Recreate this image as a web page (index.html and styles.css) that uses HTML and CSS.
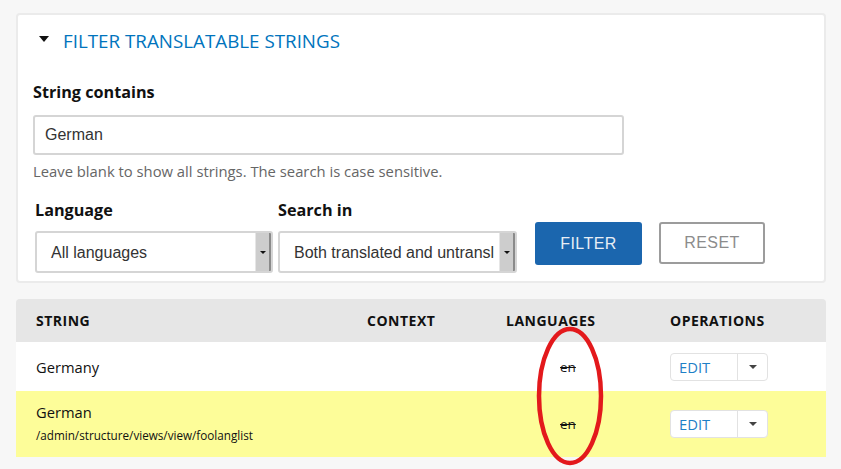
FILE: index.html
```html
<!DOCTYPE html>
<html>
<head>
<meta charset="utf-8">
<link rel="stylesheet" href="styles.css">
</head>
<body>
<div class="page">
  <section class="panel">
    <div class="summary">
      <span class="caret"></span>
      <span class="summary-title">FILTER TRANSLATABLE STRINGS</span>
    </div>
    <div class="field">
      <label class="label">String contains</label>
      <div class="textbox">German</div>
      <div class="desc">Leave blank to show all strings. The search is case sensitive.</div>
    </div>
    <div class="row">
      <div class="sel-field">
        <label class="label">Language</label>
        <div class="select"><span class="sel-text">All languages</span><span class="sel-btn"><span class="tri"></span></span></div>
      </div>
      <div class="sel-field second">
        <label class="label">Search in</label>
        <div class="select"><span class="sel-text">Both translated and untransl</span><span class="sel-btn"><span class="tri"></span></span></div>
      </div>
      <div class="btn primary">FILTER</div>
      <div class="btn secondary">RESET</div>
    </div>
  </section>

  <div class="table">
    <div class="thead">
      <div>STRING</div>
      <div>CONTEXT</div>
      <div>LANGUAGES</div>
      <div>OPERATIONS</div>
    </div>
    <div class="tr">
      <div class="c-str">Germany</div>
      <div></div>
      <div class="c-lang"><s>en</s></div>
      <div class="c-op"><div class="drop"><span class="drop-main">EDIT</span><span class="drop-tog"><span class="tri small"></span></span></div></div>
    </div>
    <div class="tr hl">
      <div class="c-str two">German<div class="path">/admin/structure/views/view/foolanglist</div></div>
      <div></div>
      <div class="c-lang"><s>en</s></div>
      <div class="c-op"><div class="drop"><span class="drop-main">EDIT</span><span class="drop-tog"><span class="tri small"></span></span></div></div>
    </div>
  </div>
</div>
<svg class="circle" width="841" height="469" viewBox="0 0 841 469">
  <ellipse cx="570" cy="396" rx="31" ry="67" fill="none" stroke="#e3191c" stroke-width="4.5"/>
</svg>
</body>
</html>
```

FILE: styles.css
```css
html, body {
  margin: 0;
  padding: 0;
}
body {
  background: #f7f7f7;
  font-family: "Open Sans", "Noto Sans", sans-serif;
  color: #222;
  width: 841px;
  height: 469px;
  overflow: hidden;
  position: relative;
}
.page {
  padding: 13px 15px 0 16px;
}
.panel {
  background: #fff;
  border: 2px solid #ebebeb;
  border-radius: 4px;
  padding: 0 0 8px 15px;
  height: 270px;
  box-sizing: border-box;
}
.summary {
  display: flex;
  align-items: center;
  height: 52px;
  padding-left: 6px;
}
.caret {
  width: 0;
  height: 0;
  border-left: 5px solid transparent;
  border-right: 5px solid transparent;
  border-top: 6px solid #111;
  margin-right: 14px;
  margin-top: -4px;
}
.summary-title {
  color: #0074bd;
  font-size: 18.8px;
}
.field {
  margin-top: 15px;
}
.label {
  display: block;
  font-weight: 700;
  font-size: 16.2px;
  color: #111;
  line-height: 20px;
}
.textbox {
  margin-top: 13px;
  width: 591px;
  height: 40px;
  box-sizing: border-box;
  border: 2px solid #d5d5d5;
  border-radius: 3px;
  font-family: "Liberation Sans", Arial, sans-serif;
  font-size: 16px;
  color: #333;
  padding: 0 10px;
  display: flex;
  align-items: center;
}
.desc {
  margin-top: 6px;
  font-size: 14.8px;
  color: #666;
  line-height: 20px;
}
.row {
  display: flex;
  align-items: flex-end;
  margin-top: 19px;
  padding-left: 2px;
}
.sel-field .select {
  margin-top: 11px;
}
.sel-field {
  margin-right: 5px;
}
.select {
  width: 238px;
  height: 42px;
  box-sizing: border-box;
  border: 2px solid #d5d5d5;
  border-radius: 3px;
  display: flex;
  font-family: "Liberation Sans", Arial, sans-serif;
  font-size: 16px;
  color: #333;
  overflow: hidden;
}
.sel-text {
  flex: 1;
  padding-left: 14px;
  padding-top: 2px;
  display: flex;
  align-items: center;
  white-space: nowrap;
  overflow: hidden;
}
.sel-btn {
  width: 13px;
  background: #cdcdcd;
  border-right: 2px solid #8a8a8a;
  border-left: 1px solid #e6e6e6;
  display: flex;
  align-items: center;
  justify-content: center;
}
.tri {
  width: 0;
  height: 0;
  border-left: 3px solid transparent;
  border-right: 3px solid transparent;
  border-top: 3px solid #111;
}
.tri.small {
  border-left-width: 4px;
  border-right-width: 4px;
  border-top: 4px solid #444;
}
.second .select {
  width: 239px;
}
.btn {
  height: 43px;
  box-sizing: border-box;
  border-radius: 3px;
  display: flex;
  align-items: center;
  justify-content: center;
  font-family: "Liberation Sans", Arial, sans-serif;
  font-size: 16px;
  letter-spacing: 0.4px;
  margin-bottom: 8px;
}
.primary {
  margin-left: 13px;
  width: 107px;
  background: #1b66ae;
  color: #e8eef5;
}
.secondary {
  margin-left: 17px;
  width: 106px;
  border: 2px solid #9c9c9c;
  color: #8c8c8c;
  height: 42px;
  margin-bottom: 9px;
}
.table {
  margin-top: 16px;
  width: 810px;
}
.thead, .tr {
  display: grid;
  grid-template-columns: 331px 139px 164px 1fr;
  padding-left: 20px;
}
.thead {
  background: #e6e6e6;
  border-radius: 4px 4px 0 0;
  height: 43px;
  align-items: center;
  font-weight: 700;
  font-size: 14px;
  letter-spacing: 0.5px;
  color: #111;
}
.tr {
  background: #fff;
  height: 49px;
  align-items: center;
  font-size: 14.7px;
  color: #111;
}
.tr.hl {
  background: #fdfd99;
  height: 66px;
}
.c-str.two {
  padding-bottom: 4px;
}
.path {
  font-size: 11.7px;
  margin-top: 5px;
}
.c-lang {
  padding-left: 54px;
  font-size: 13.5px;
}
.c-lang s {
  text-decoration-thickness: 1px;
}
.drop {
  display: flex;
  width: 98px;
  height: 28px;
  box-sizing: border-box;
  border: 1px solid #e2e2e2;
  border-radius: 4px;
  background: #fff;
}
.drop-main {
  width: 67px;
  border-right: 1px solid #e2e2e2;
  color: #1f80c6;
  font-size: 14.8px;
  display: flex;
  align-items: center;
  padding-left: 8px;
  box-sizing: border-box;
}
.drop-tog {
  flex: 1;
  display: flex;
  align-items: center;
  justify-content: center;
}
.circle {
  position: absolute;
  left: 0;
  top: 0;
  pointer-events: none;
}
```
